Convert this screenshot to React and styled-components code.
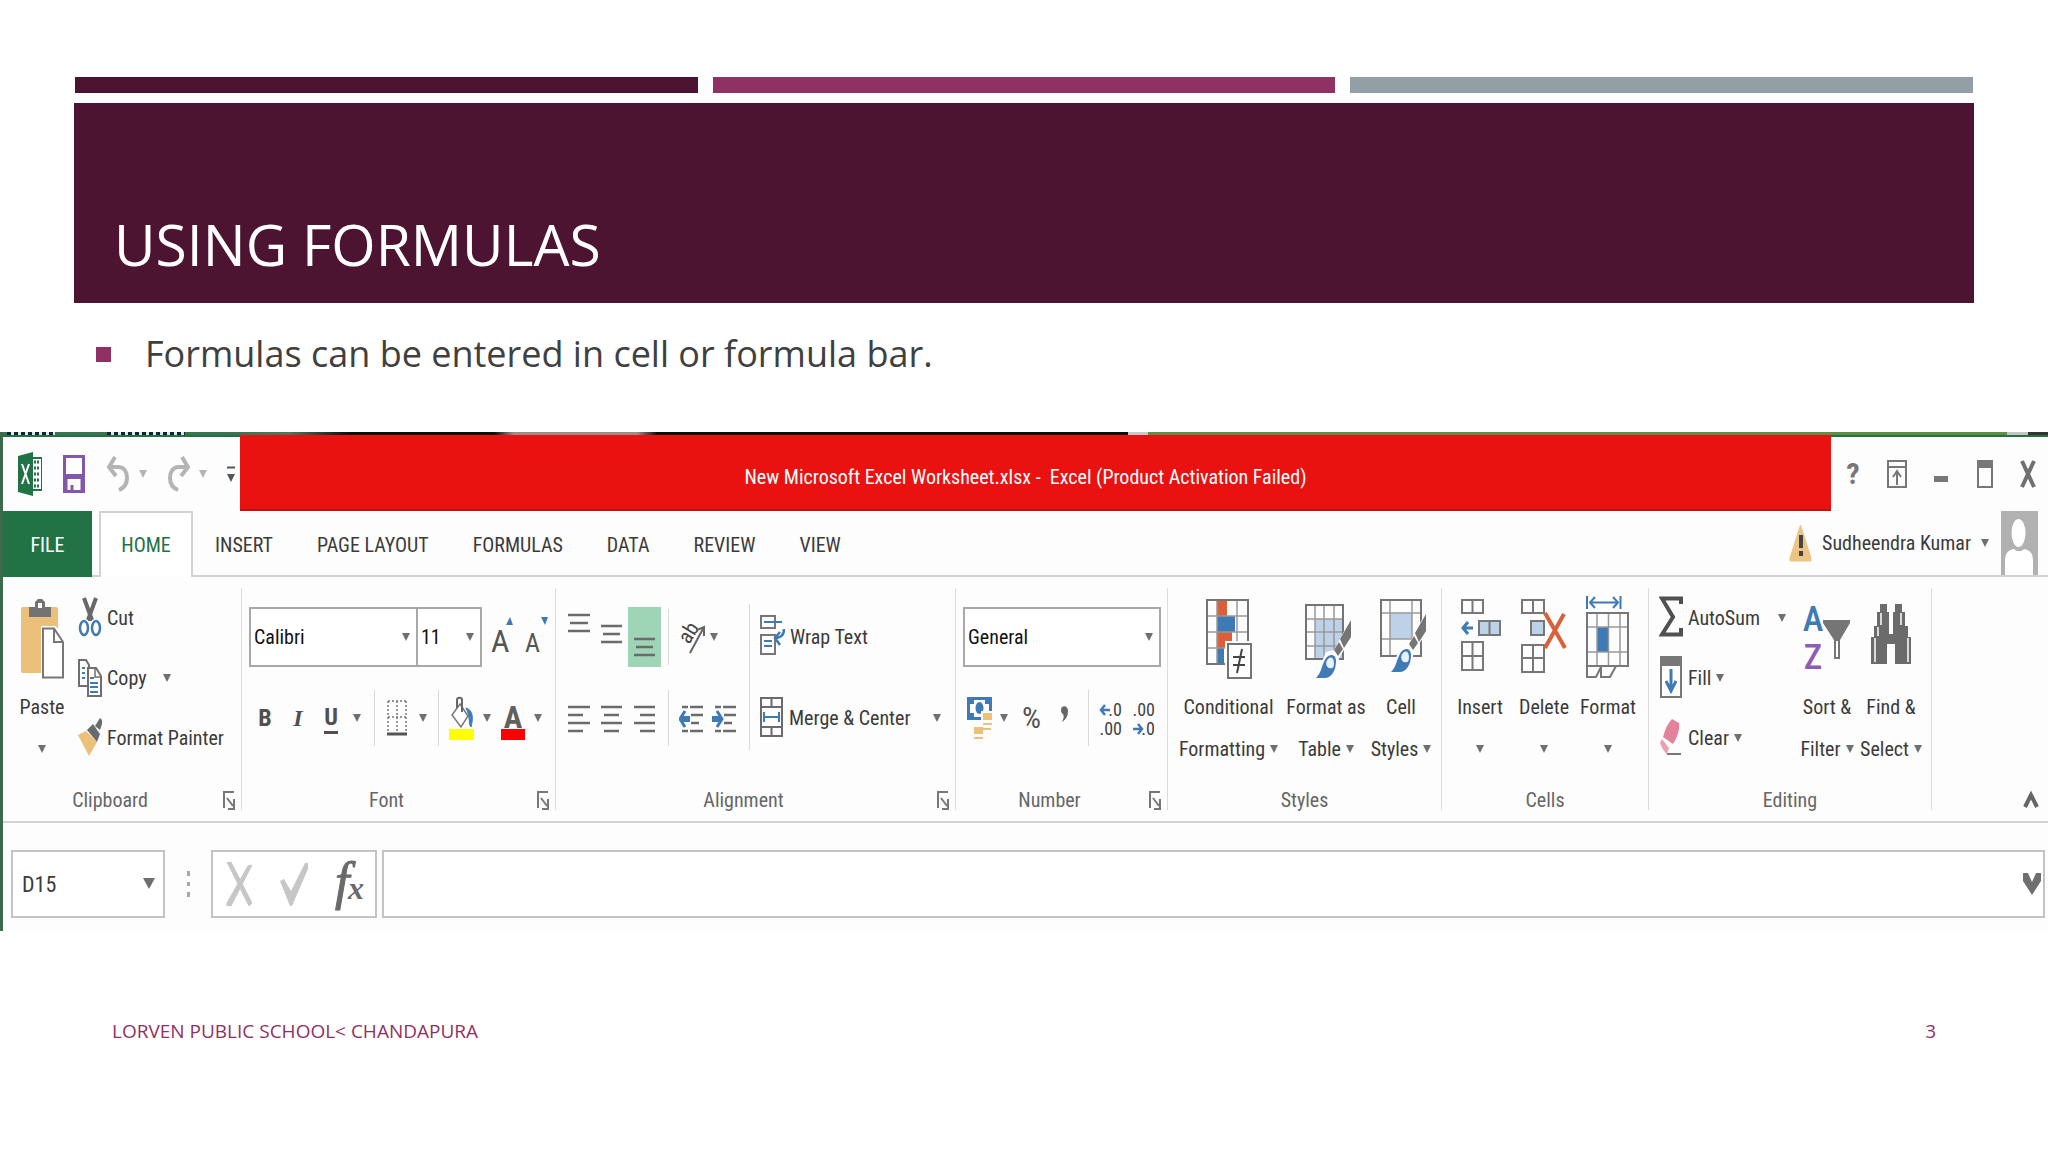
import React from "react";
import styled, { createGlobalStyle, css } from "styled-components";

const ui = `"Roboto Condensed", "Open Sans", sans-serif`;
const slideFont = `"Open Sans", "Noto Sans", sans-serif`;

const c = {
  plum: "#4c1431",
  berry: "#903163",
  slate: "#929fa5",
  green: "#217346",
  ink: "#3b3b3b",
  gray: "#6f6f6f",
  line: "#d2d2d2",
  blue: "#3f7ab5",
  sky: "#bdd1e8",
  orange: "#d9603b",
  sand: "#ebc07a",
};

const GlobalStyle = createGlobalStyle`
  *, *::before, *::after { box-sizing: border-box; }
  body { margin: 0; background: #fff; }
`;

/* ---------- slide ---------- */

const Slide = styled.div`
  min-height: 100vh;
  padding-top: 77px;
  background: #fff;
  font-family: ${slideFont};
`;

const Accents = styled.div`
  display: grid;
  grid-template-columns: repeat(3, 1fr);
  gap: 15px;
  margin: 0 75px 10px;
`;

const Accent = styled.div`
  height: 16px;
  background: ${(p) => p.$color};
`;

const Banner = styled.header`
  display: flex;
  align-items: flex-end;
  height: 200px;
  margin: 0 74px;
  padding: 0 40px 21px;
  background: ${c.plum};
`;

const Title = styled.h1`
  margin: 0;
  color: #fff;
  font-size: 57px;
  font-weight: 400;
  line-height: 76px;
  text-transform: uppercase;
`;

const Points = styled.ul`
  margin: 26px 96px 53px;
  padding: 0;
  list-style: none;
`;

const Point = styled.li`
  display: flex;
  align-items: center;
  gap: 34px;
  color: #404040;
  font-size: 36px;
  line-height: 50px;

  &::before {
    content: "";
    width: 15px;
    height: 15px;
    background: ${c.berry};
  }
`;

const SlideFooter = styled.footer`
  display: flex;
  justify-content: space-between;
  margin-top: 88px;
  padding: 0 112px;
  color: ${c.berry};
  font-size: 19px;
  line-height: 24px;
`;

/* ---------- excel window ---------- */

const Window = styled.section`
  border-left: 3px solid #3b6b4c;
  background: #fdfdfd;
  color: ${c.ink};
  font-family: ${ui};
  font-size: 20px;
`;

const TopEdge = styled.div`
  height: 3px;
  background:
    repeating-linear-gradient(90deg, #123 0 4px, #dfe8e2 4px 7px) 4px 0 / 48px 3px no-repeat,
    repeating-linear-gradient(90deg, #123 0 4px, #dfe8e2 4px 7px) 104px 0 / 78px 3px no-repeat,
    linear-gradient(90deg, #3a7350 0 11%, #53745a 14%, #0d0d0d 17% 24%, #a08c86 25% 31%,
      #0d0d0d 32% 55%, #c9c9c9 55% 56%, #5f8f45 56% 98%, #c4c4c4 98% 99%, #333 99%);
`;

const TitleBar = styled.div`
  display: flex;
  height: 76px;
`;

const TitleSide = styled.div`
  display: flex;
  flex: none;
  align-items: center;
  width: ${(p) => p.$w}px;
  padding-left: ${(p) => p.$pad || 0}px;
  border-top: 2px solid ${c.green};
`;

const DocTitle = styled.div`
  display: flex;
  flex: 1;
  align-items: center;
  justify-content: center;
  padding: 10px 20px 0 0;
  border-bottom: 2px solid #bd1313;
  background: #ea1111;
  color: #fff;
  line-height: 28px;
  white-space: pre;
`;

const Btn = styled.button`
  display: flex;
  flex: none;
  align-items: center;
  justify-content: center;
  width: ${(p) => (p.$w ? `${p.$w}px` : "auto")};
  height: ${(p) => (p.$h ? `${p.$h}px` : "60px")};
  margin: 0 0 0 ${(p) => p.$ml || 0}px;
  padding: 0;
  border: 0;
  background: ${(p) => (p.$on ? "#9fd5b7" : "transparent")};
  color: inherit;
  font: inherit;
  cursor: pointer;
`;

const Glyph = styled.span`
  color: #505050;
  font-size: 24px;
  line-height: 28px;
  ${(p) => p.$kind === "bold" && css`font-weight: 700;`}
  ${(p) => p.$kind === "italic" && css`font-family: "Liberation Serif", serif; font-style: italic; font-weight: 700;`}
  ${(p) => p.$kind === "underline" && css`font-weight: 700; border-bottom: 3px solid #505050;`}
  ${(p) => p.$kind === "help" && css`font-weight: 700; font-size: 30px; color: #777;`}
  ${(p) => p.$kind === "percent" && css`font-size: 30px;`}
`;

const Svg = styled.svg`
  display: block;
  flex: none;
`;

const TabBar = styled.nav`
  display: flex;
  height: 66px;
  border-bottom: 2px solid ${c.line};
`;

const Tab = styled.a`
  display: flex;
  align-items: center;
  height: 66px;
  padding: 2px 22px 0;
  color: ${c.ink};
  text-decoration: none;
  white-space: nowrap;
  ${(p) => p.$kind === "file" && css`
    justify-content: center;
    width: 89px;
    margin-right: 7px;
    background: ${c.green};
    color: #fff;
  `}
  ${(p) => p.$kind === "active" && css`
    justify-content: center;
    width: 94px;
    border: 2px solid ${c.line};
    border-bottom: 0;
    padding: 0;
    background: #fff;
    color: ${c.green};
  `}
`;

const Account = styled.button`
  display: flex;
  align-items: center;
  gap: 10px;
  height: 64px;
  margin: 0 10px 0 auto;
  padding: 0;
  border: 0;
  background: transparent;
  color: inherit;
  font: inherit;
`;

const Avatar = styled.span`
  margin-left: 2px;
`;

const Ribbon = styled.div`
  display: flex;
  padding: 11px 0;
  border-bottom: 2px solid ${c.line};
`;

const GroupBox = styled.section`
  display: flex;
  flex: none;
  flex-direction: column;
  width: ${(p) => p.$w}px;
  height: 222px;
  border-right: 1px solid #dcdcdc;
`;

const Tools = styled.div`
  display: flex;
  flex: 1;
  padding-left: ${(p) => p.$pad || 7}px;
`;

const GroupFoot = styled.footer`
  display: flex;
  align-items: center;
  height: 20px;
  padding-right: ${(p) => (p.$launcher ? 6 : 0)}px;
  color: #666;
`;

const GroupName = styled.h2`
  flex: 1;
  margin: 0;
  font-size: 20px;
  font-weight: 400;
  line-height: 20px;
  text-align: center;
`;

const Col = styled.div`
  display: flex;
  flex-direction: column;
  width: ${(p) => (p.$w ? `${p.$w}px` : "auto")};
  padding-top: ${(p) => p.$top || 0}px;
  gap: ${(p) => p.$gap || 0}px;
`;

const Row = styled.div`
  display: flex;
  align-items: center;
  height: 60px;
`;

const Sep = styled.span`
  flex: none;
  align-self: stretch;
  width: 1px;
  margin: 2px ${(p) => p.$r || 0}px 2px ${(p) => p.$l || 0}px;
  background: #d9d9d9;
`;

const TallSep = styled(Sep)`
  align-self: flex-start;
  height: 146px;
  margin: 16px 6px 0 0;
`;

const SmallBtn = styled(Btn)`
  gap: 5px;
  padding-left: 4px;
  white-space: nowrap;
`;

const BigBtn = styled.button`
  display: flex;
  flex: none;
  flex-direction: column;
  align-items: center;
  width: ${(p) => p.$w}px;
  margin: 0;
  padding: 8px 0 0;
  border: 0;
  background: transparent;
  color: inherit;
  font: inherit;
  line-height: 42px;
  white-space: nowrap;
  cursor: pointer;
`;

const BigLine = styled.span`
  display: flex;
  align-items: center;
  gap: 5px;
  height: 42px;
  &:first-of-type { margin-top: 6px; }
`;

const Combo = styled.div`
  display: grid;
  align-items: center;
  width: ${(p) => p.$w}px;
  height: 60px;
  margin-left: ${(p) => p.$ml || 0}px;

  & > * { grid-area: 1 / 1; }
  & > svg { justify-self: end; margin-right: 8px; pointer-events: none; }
`;

const Select = styled.select`
  width: 100%;
  height: 60px;
  padding: 0 20px 0 3px;
  appearance: none;
  border: 2px solid #a8a8a8;
  border-radius: 0;
  background: #fff;
  color: #111;
  font: inherit;
`;

const CollapseSlot = styled.div`
  display: flex;
  flex: 1;
  align-items: flex-end;
  justify-content: flex-end;
  padding-right: 9px;
`;

const FormulaBar = styled.div`
  display: flex;
  padding: 27px 3px 13px 8px;
`;

const Divider = styled.span`
  display: flex;
  flex: none;
  align-items: center;
  justify-content: center;
  width: 46px;
`;

const Field = styled.div`
  display: flex;
  flex: ${(p) => (p.$w ? "none" : "1")};
  align-items: center;
  width: ${(p) => (p.$w ? `${p.$w}px` : "auto")};
  height: 68px;
  margin-left: ${(p) => p.$ml || 0}px;
  border: 2px solid #c3c3c3;
  background: #fff;
`;

const Input = styled.input`
  flex: 1;
  min-width: 0;
  height: 60px;
  padding: 0 0 0 9px;
  border: 0;
  outline: 0;
  background: transparent;
  color: ${c.ink};
  font: inherit;
  font-size: ${(p) => (p.$large ? 22 : 20)}px;
`;

/* ---------- drawings ---------- */

const Icon = ({ w, h, children }) => (
  <Svg width={w} height={h} viewBox={`0 0 ${w} ${h}`} fill="none" aria-hidden="true">
    {children}
  </Svg>
);

const Caret = ({ color = c.gray, big }) => (
  <Icon w={big ? 12 : 8} h={big ? 12 : 8}>
    <path d={big ? "M0 0h12L6 11z" : "M0 0h8L4 8z"} fill={color} />
  </Icon>
);

const ExcelLogo = () => (
  <Icon w={24} h={44}>
    <path d="M14 6h10v32H14z" fill="#fff" stroke={c.green} strokeWidth="2" />
    <path d="M16 10h6M16 16h6M16 22h6M16 28h6M16 34h6" stroke={c.green} strokeWidth="3" strokeDasharray="2 1" />
    <path d="M0 4l15-4v44L0 40z" fill={c.green} />
    <path d="M4 12l7 20M11 12L4 32" stroke="#fff" strokeWidth="2" />
  </Icon>
);

const SaveIcon = () => (
  <Icon w={22} h={38}>
    <path d="M1.5 1.5h19v35h-19z" stroke="#8458a8" strokeWidth="3" fill="#fff" />
    <path d="M1 19h20v5H1z" fill="#8458a8" />
    <path d="M3 24v12M19 24v12M9 30v7" stroke="#8458a8" strokeWidth="3" />
  </Icon>
);

const UndoIcon = ({ flip }) => (
  <Icon w={22} h={36}>
    <g transform={flip ? "translate(22 0) scale(-1 1)" : undefined} stroke="#b4b4b4" strokeWidth="4">
      <path d="M8 1L2 11l7 9" />
      <path d="M2 11h9c6 0 9 5 9 11s-3 10-8 12" />
    </g>
  </Icon>
);

const CustomizeIcon = () => (
  <Icon w={8} h={16}>
    <path d="M0 1.5h8" stroke="#555" strokeWidth="2" />
    <path d="M0 8h8l-4 8z" fill="#555" />
  </Icon>
);

const RibbonOptionsIcon = () => (
  <Icon w={20} h={28}>
    <path d="M1 1h18v26H1zM1 7h18" stroke="#777" strokeWidth="2" />
    <path d="M10 25V11M6 17l4-6 4 6" stroke="#777" strokeWidth="2" />
  </Icon>
);

const MinimizeIcon = () => <Icon w={14} h={28}><path d="M0 16h14v6H0z" fill="#777" /></Icon>;
const MaximizeIcon = () => (
  <Icon w={16} h={28}><path d="M1 1h14v26H1z" stroke="#777" strokeWidth="2" /><path d="M0 0h16v8H0z" fill="#777" /></Icon>
);
const CloseIcon = () => (
  <Icon w={16} h={28}><path d="M2 1l12 26M14 1L2 27" stroke="#707070" strokeWidth="4" /></Icon>
);

const WarningIcon = () => (
  <Icon w={23} h={38}>
    <path d="M11.5 1L22 34v3H1v-3z" fill="#edc483" stroke="#edc483" strokeLinejoin="round" />
    <path d="M12 11v13M12 27v5" stroke="#444" strokeWidth="4" />
  </Icon>
);

const AvatarIcon = () => (
  <Icon w={37} h={64}>
    <path d="M0 0h37v64H0z" fill="#b1b1b1" />
    <ellipse cx="17.5" cy="22" rx="7" ry="14" fill="#fff" />
    <path d="M4 64V50c0-8 3-11 9-12 3 3 7 3 10 0 6 1 9 4 9 12v14z" fill="#fff" />
  </Icon>
);

const PasteIcon = () => (
  <Icon w={48} h={84}>
    <rect x="3" y="11" width="37" height="66" rx="2" fill={c.sand} />
    <path d="M11 11h6V6l3-3h4l3 3v5h6v10H11z" fill="#737373" />
    <path d="M20 7h4v5h-4z" fill="#fff" />
    <path d="M23 30h15l9 14v39H23z" fill="#fff" />
    <path d="M25 32.5h11L45 46v35.5H25zM36 33v13h9" stroke="#777" strokeWidth="2" fill="#fff" />
  </Icon>
);

const CutIcon = () => (
  <Icon w={24} h={42}>
    <path d="M6 1l8 22M18 1l-8 22" stroke="#686868" strokeWidth="4" />
    <ellipse cx="6" cy="31" rx="4" ry="7" stroke={c.blue} strokeWidth="2.5" />
    <ellipse cx="18" cy="31" rx="4" ry="7" stroke={c.blue} strokeWidth="2.5" />
    <path d="M12 18v6" stroke="#686868" strokeWidth="4" />
  </Icon>
);

const CopyIcon = () => (
  <Icon w={24} h={40}>
    <path d="M10 28H1V2h7l3 5v3" stroke="#6f6f6f" strokeWidth="2" />
    <path d="M4 10h3M4 15h3M4 20h3" stroke={c.blue} strokeWidth="2" />
    <path d="M10 10h8l5 8v20H10z" fill="#fff" stroke="#6f6f6f" strokeWidth="2" />
    <path d="M17 10v9h5" stroke="#6f6f6f" strokeWidth="1.5" />
    <path d="M12 20h4M12 25h8M12 29h8M12 34h8" stroke={c.blue} strokeWidth="2" />
  </Icon>
);

const PainterIcon = () => (
  <Icon w={24} h={42}>
    <path d="M0 18l8-4 11 11-8 14z" fill={c.sand} />
    <path d="M9 13l6-6 7 10-3 8z" fill="#6b6b6b" />
    <path d="M17 9l5-8 3 3-3 9z" fill="#6b6b6b" />
  </Icon>
);

const GrowIcon = ({ shrink }) => (
  <Icon w={26} h={60}>
    <text x="1" y="45" fontFamily={ui} fontSize={shrink ? 26 : 32} fill="#555">A</text>
    <path d={shrink ? "M17 10h7l-3 8z" : "M16 18h7l-3-8z"} fill={c.blue} />
  </Icon>
);

const BordersIcon = () => (
  <Icon w={20} h={36}>
    <path d="M1 1h18M1 17h18M1 1v32M10 1v32M19 1v32" stroke="#777" strokeWidth="1.5" strokeDasharray="2 2" />
    <path d="M0 34h20" stroke="#555" strokeWidth="3" />
  </Icon>
);

const FillColorIcon = () => (
  <Icon w={25} h={44}>
    <path d="M11 8l8 12-7 11-9-12z" fill="#fff" stroke="#777" strokeWidth="1.5" />
    <path d="M8 12V4c0-3 5-3 5 0v12" stroke="#666" strokeWidth="2" />
    <path d="M17 12c6 2 8 8 5 19-3-3 0-9-5-19z" fill={c.blue} stroke={c.blue} />
    <path d="M0 33h25v11H0z" fill="#ff0" />
  </Icon>
);

const FontColorIcon = () => (
  <Icon w={24} h={44}>
    <text x="12" y="32" textAnchor="middle" fontFamily={ui} fontWeight="700" fontSize="31" fill="#606060">A</text>
    <path d="M0 33h24v11H0z" fill="#f00" />
  </Icon>
);

const LINES = {
  top: [[7, 1, 23], [15, 3, 21], [23, 1, 23]],
  middle: [[18, 1, 22], [26, 3, 20], [34, 1, 22]],
  bottom: [[31, 1, 22], [39, 3, 20], [47, 1, 22]],
  left: [[18, 1, 23], [26, 1, 16], [34, 1, 23], [42, 1, 16]],
  center: [[18, 1, 22], [26, 4, 19], [34, 1, 22], [42, 4, 19]],
  right: [[18, 1, 22], [26, 7, 22], [34, 1, 22], [42, 7, 22]],
};

const LinesIcon = ({ kind }) => (
  <Icon w={24} h={58}>
    {LINES[kind].map(([y, x1, x2]) => (
      <path key={y} d={`M${x1} ${y}H${x2}`} stroke="#6b6b6b" strokeWidth="2.5" />
    ))}
  </Icon>
);

const IndentIcon = ({ right }) => (
  <Icon w={24} h={58}>
    <path d="M3 18h6M11 18h13M12 26h12M12 34h8M3 42h6M11 42h13" stroke="#6b6b6b" strokeWidth="2.5" />
    <g transform={right ? "translate(11 0) scale(-1 1)" : undefined}>
      <path d="M2 30h9" stroke={c.blue} strokeWidth="6" />
      <path d="M6 22L1 30l5 8" stroke={c.blue} strokeWidth="3" />
    </g>
  </Icon>
);

const OrientationIcon = () => (
  <Icon w={34} h={60}>
    <text transform="translate(13 38) rotate(-58)" fontFamily={ui} fontSize="21" fill="#444">ab</text>
    <path d="M14 46L28 20M21 23l7-3v9" stroke="#666" strokeWidth="2" />
  </Icon>
);

const WrapIcon = () => (
  <Icon w={25} h={44}>
    <path d="M1 1h14v12H1zM1 20h14v19H1z" stroke="#777" strokeWidth="2" />
    <path d="M4 7h18M4 26h8M4 31h8" stroke={c.blue} strokeWidth="2" />
    <path d="M24 14c0 6-3 9-9 9M20 17l-5 6 5 7" stroke={c.blue} strokeWidth="2.5" />
  </Icon>
);

const MergeIcon = () => (
  <Icon w={24} h={42}>
    <path d="M1 1h21v38H1zM1 10h21M1 30h21M11.5 1v9M11.5 30v9" stroke="#6b6b6b" strokeWidth="2" />
    <path d="M4 20h15M4 15v10M19 15v10" stroke={c.blue} strokeWidth="2" />
  </Icon>
);

const AccountingIcon = () => (
  <Icon w={25} h={44}>
    <path d="M0 1h25v23H0z" fill={c.blue} />
    <path d="M7 4h11v4h4v9h-4v4H7v-4H3V8h4z" fill="#fff" />
    <ellipse cx="12.5" cy="12" rx="4" ry="6" fill={c.blue} />
    <path d="M14 15h11v19H14zM6 28h10v16H6z" fill="#fdfdfd" />
    <path d="M16 17h9v7h-9zM7 31h9v7H7z" fill={c.sand} />
    <path d="M16 28h9M16 33h8M7 42h9" stroke={c.sand} strokeWidth="2" />
  </Icon>
);

const DecimalIcon = ({ less }) => (
  <Icon w={26} h={48}>
    <g fontFamily={ui} fontSize="18" fill="#444" textAnchor="end">
      <text x="24" y="22">{less ? ".00" : ".0"}</text>
      <text x="24" y="41">{less ? ".0" : ".00"}</text>
    </g>
    <path d={less ? "M2 35h9M7 30l4 5-4 5" : "M12 16H3M7 11l-4 5 4 5"} stroke={c.blue} strokeWidth="2.5" />
  </Icon>
);

const ConditionalIcon = () => (
  <Icon w={48} h={84}>
    <path d="M12 3h10v17H12zM12 36h15v16H12z" fill={c.orange} />
    <path d="M12 20h18v16H12zM12 52h7v16h-7z" fill={c.blue} />
    <path d="M2 20h41M2 36h41M2 52h41M12 4v64M32 4v64" stroke="#999" strokeWidth="1.5" />
    <path d="M2 4h41v64H2z" stroke="#747474" strokeWidth="2" />
    <path d="M20 45h28v39H20z" fill="#fdfdfd" />
    <path d="M23 48h23v34H23z" fill="#fff" stroke="#747474" strokeWidth="2" />
    <path d="M28 61h12M28 69h12M37 53l-5 24" stroke="#444" strokeWidth="2" />
  </Icon>
);

const Brush = ({ y = 0 }) => (
  <g transform={`translate(0 ${y})`}>
    <path d="M48 20L30 54l-8 2-12 28h18l8-24 12-18z" fill="#fdfdfd" />
    <path d="M47 24L36 43l4 9 7-11zM35 46l-5 8 4 6 5-7z" fill="#757575" />
    <path d="M12 82c6-6 5-12 10-20 4-5 10-4 10 3 0 10-5 17-11 17z" fill={c.blue} />
    <path d="M24 63c3-3 6-1 6 4s-2 6-5 5-4-6-1-9z" fill="#e8f0f8" />
  </g>
);

const FormatTableIcon = () => (
  <Icon w={52} h={84}>
    <g transform="translate(4 0)">
      <path d="M11 23h28v39H11z" fill={c.sky} />
      <path d="M2 23h37M2 36h37M2 50h37M11 9v53M20 9v53M30 9v53" stroke="#999" strokeWidth="1.5" />
      <path d="M2 9h37v54H2z" stroke="#747474" strokeWidth="2" />
      <Brush />
    </g>
  </Icon>
);

const CellStylesIcon = () => (
  <Icon w={52} h={84}>
    <g transform="translate(4 0)">
      <path d="M11 17h22v26H11z" fill={c.sky} />
      <path d="M2 17h40M2 43h40M11 4v56M33 4v56" stroke="#999" strokeWidth="1.5" />
      <path d="M2 4h40v56H2z" stroke="#747474" strokeWidth="2" />
      <Brush y={-6} />
    </g>
  </Icon>
);

const InsertIcon = () => (
  <Icon w={48} h={84}>
    <path d="M6 4h21v13H6zM16.5 4v13M6 46h21v28H6zM16.5 46v28M6 60h21" stroke="#777" strokeWidth="2" />
    <path d="M23 25h21v14H23zM33.5 25v14" fill={c.sky} stroke="#777" strokeWidth="2" />
    <path d="M7 32h10M12 26l-5 6 5 6" stroke={c.blue} strokeWidth="3" />
  </Icon>
);

const DeleteIcon = () => (
  <Icon w={48} h={84}>
    <path d="M2 4h22v13H2zM13 4v13M2 49h22v27H2zM13 49v27M2 62h22" stroke="#777" strokeWidth="2" />
    <path d="M11 25h13v14H11z" fill={c.sky} stroke="#777" strokeWidth="2" />
    <path d="M25 17l20 35M44 18L25 52" stroke={c.orange} strokeWidth="4" />
  </Icon>
);

const FormatIcon = () => (
  <Icon w={48} h={84}>
    <path d="M3 0v13M36.5 0v13M6 6.5h28M11 1L6 6.5l5 5.5M29 1l5 5.5-5 5.5" stroke={c.blue} strokeWidth="2" />
    <path d="M13 31h11v25H13z" fill={c.blue} />
    <path d="M3 31h41M3 56h41M13 17v53M24.5 17v53M36 17v53" stroke="#999" strokeWidth="1.5" />
    <path d="M3 17h41v53H3zM3 70v11h9l5-10v10h9l6-11" stroke="#777" strokeWidth="2" />
  </Icon>
);

const SumIcon = () => (
  <Icon w={24} h={44}>
    <path d="M22 8V2.5H3L14 21 3 38.5h19V32" stroke="#505050" strokeWidth="4" />
  </Icon>
);

const FillIcon = () => (
  <Icon w={24} h={46}>
    <path d="M2 2h20v40H2z" stroke="#777" strokeWidth="2" fill="#fff" />
    <path d="M1 1h22v10H1z" fill="#777" />
    <path d="M12 14v22M7 26l5 10 5-10" stroke={c.blue} strokeWidth="3" />
  </Icon>
);

const ClearIcon = () => (
  <Icon w={24} h={42}>
    <path d="M13 2l7 4c1 8-2 14-6 21l-10-7C6 12 9 6 13 2z" fill="#e2839a" />
    <path d="M3 22l7 9-2 6c-3-2-6-8-7-11z" fill="#e8a0b2" />
    <path d="M8 37h14" stroke="#777" strokeWidth="2" />
  </Icon>
);

const SortIcon = () => (
  <Icon w={48} h={84}>
    <text x="10" y="35" textAnchor="middle" fontFamily={ui} fontWeight="500" fontSize="35" fill={c.blue}>A</text>
    <text x="10" y="73" textAnchor="middle" fontFamily={ui} fontWeight="500" fontSize="35" fill="#8f5bb5">Z</text>
    <path d="M20 24h27v3L37 44v19h-6V44L20 27z" fill="#757575" />
    <path d="M34 45v16" stroke="#fff" strokeWidth="2" />
  </Icon>
);

const FindIcon = () => (
  <Icon w={48} h={84}>
    <path d="M13 8h7v8h2v22h4V16h2V8h7v8h3v14h3v11h3v27H28V48h-8v20H4V41h3V30h3V16h3z" fill="#6b6b6b" />
    <path d="M8 42v24M41 42v24M11 31v9M14 17v12M34 17v12M22 36h4" stroke="#fff" strokeWidth="1.5" />
  </Icon>
);

const LauncherIcon = () => (
  <Icon w={12} h={20}>
    <path d="M1 18V2h10" stroke="#777" strokeWidth="2" />
    <path d="M4 8l6 8M11 9v10H5" stroke="#777" strokeWidth="2" />
  </Icon>
);

const CollapseIcon = () => (
  <Icon w={16} h={18}><path d="M2 16L8 4l6 12" stroke="#666" strokeWidth="4" /></Icon>
);

const ExpandIcon = () => <Icon w={18} h={22}><path d="M0 0h5l4 9 4-9h5v8L9 22 0 8z" fill="#6f6f6f" /></Icon>;
const DotsIcon = () => (
  <Icon w={3} h={28}><path d="M0 1h3v5H0zM0 12h3v4H0zM0 22h3v5H0z" fill="#a8a8a8" /></Icon>
);
const CancelIcon = () => (
  <Icon w={26} h={44}>
    <path d="M1 0h4l21 41-3 3zM26 3L5 44H1V41L22 4z" fill="#c6c6c6" stroke="#c6c6c6" />
  </Icon>
);
const EnterIcon = () => <Icon w={30} h={46}><path d="M1 20l4-2 7 12L26 2h3v6L13 45h-2z" fill="#c6c6c6" /></Icon>;
const FxIcon = () => (
  <Icon w={36} h={62}>
    <g fontFamily='"Liberation Serif", serif' fontStyle="italic" fill="#6a6a6a">
      <text x="5" y="46" fontSize="52" stroke="#6a6a6a">f</text>
      <text x="18" y="46" fontWeight="700" fontSize="32">x</text>
    </g>
  </Icon>
);

/* ---------- composed parts ---------- */

const IconBtn = ({ label, children, ...rest }) => (
  <Btn type="button" aria-label={label} {...rest}>{children}</Btn>
);

const Drop = ({ label, w, color, ...rest }) => (
  <IconBtn label={`${label} options`} $w={w} {...rest}><Caret color={color} /></IconBtn>
);

const Group = ({ name, w, pad, launcher, children }) => (
  <GroupBox $w={w} aria-label={name}>
    <Tools $pad={pad}>{children}</Tools>
    <GroupFoot $launcher={launcher}>
      <GroupName>{name}</GroupName>
      {launcher && <IconBtn label={`${name} settings`} $w={12} $h={20} $ml={6}><LauncherIcon /></IconBtn>}
    </GroupFoot>
  </GroupBox>
);

const Big = ({ w, icon, top, bottom }) => (
  <BigBtn type="button" $w={w}>
    {icon}
    <BigLine>{top}</BigLine>
    <BigLine>{bottom}<Caret /></BigLine>
  </BigBtn>
);

const Picker = ({ label, w, ml, options }) => (
  <Combo $w={w} $ml={ml}>
    <Select aria-label={label} defaultValue={options[0]}>
      {options.map((o) => <option key={o}>{o}</option>)}
    </Select>
    <Caret />
  </Combo>
);

const TABS = ["INSERT", "PAGE LAYOUT", "FORMULAS", "DATA", "REVIEW", "VIEW"];

const ExcelWindow = () => (
  <Window aria-label="Excel">
    <TopEdge />
    <TitleBar>
      <TitleSide $w={237} $pad={8}>
        <IconBtn label="Excel" $w={38}><ExcelLogo /></IconBtn>
        <IconBtn label="Save" $w={50}><SaveIcon /></IconBtn>
        <IconBtn label="Undo" $w={38}><UndoIcon /></IconBtn>
        <Drop label="Undo" w={12} color="#b4b4b4" />
        <IconBtn label="Redo" $w={36} $ml={12}><UndoIcon flip /></IconBtn>
        <Drop label="Redo" w={12} color="#b4b4b4" />
        <IconBtn label="Customize toolbar" $w={20} $ml={12}><CustomizeIcon /></IconBtn>
      </TitleSide>
      <DocTitle>{"New Microsoft Excel Worksheet.xlsx -  Excel (Product Activation Failed)"}</DocTitle>
      <TitleSide $w={217}>
        <IconBtn label="Help" $w={44}><Glyph $kind="help">?</Glyph></IconBtn>
        <IconBtn label="Ribbon display options" $w={44}><RibbonOptionsIcon /></IconBtn>
        <IconBtn label="Minimize" $w={44}><MinimizeIcon /></IconBtn>
        <IconBtn label="Maximize" $w={44}><MaximizeIcon /></IconBtn>
        <IconBtn label="Close" $w={41}><CloseIcon /></IconBtn>
      </TitleSide>
    </TitleBar>

    <TabBar>
      <Tab href="#file" $kind="file">FILE</Tab>
      <Tab href="#home" $kind="active">HOME</Tab>
      {TABS.map((t) => <Tab key={t} href={`#${t.toLowerCase().replace(" ", "-")}`}>{t}</Tab>)}
      <Account type="button">
        <WarningIcon />
        Sudheendra Kumar
        <Caret />
        <Avatar><AvatarIcon /></Avatar>
      </Account>
    </TabBar>

    <Ribbon>
      <Group name="Clipboard" w={239} launcher>
        <Big w={64} icon={<PasteIcon />} top="Paste" bottom="" />
        <Col>
          <Row><SmallBtn type="button"><CutIcon />Cut</SmallBtn></Row>
          <Row>
            <SmallBtn type="button"><CopyIcon />Copy</SmallBtn>
            <Drop label="Copy" w={20} $ml={11} />
          </Row>
          <Row><SmallBtn type="button"><PainterIcon />Format Painter</SmallBtn></Row>
        </Col>
      </Group>

      <Group name="Font" w={314} launcher>
        <Col $top={19} $gap={21}>
          <Row>
            <Picker label="Font" w={169} options={["Calibri", "Arial", "Cambria"]} />
            <Picker label="Font size" w={66} ml={-2} options={["11", "12", "14"]} />
            <IconBtn label="Increase font size" $w={36} $ml={3}><GrowIcon /></IconBtn>
            <IconBtn label="Decrease font size" $w={32}><GrowIcon shrink /></IconBtn>
          </Row>
          <Row>
            <IconBtn label="Bold" $w={32}><Glyph $kind="bold">B</Glyph></IconBtn>
            <IconBtn label="Italic" $w={34}><Glyph $kind="italic">I</Glyph></IconBtn>
            <IconBtn label="Underline" $w={32}><Glyph $kind="underline">U</Glyph></IconBtn>
            <Drop label="Underline" w={20} />
            <Sep $l={7} $r={5} />
            <IconBtn label="Borders" $w={33}><BordersIcon /></IconBtn>
            <Drop label="Borders" w={20} />
            <Sep $l={5} $r={6} />
            <IconBtn label="Fill color" $w={33}><FillColorIcon /></IconBtn>
            <Drop label="Fill color" w={18} />
            <IconBtn label="Font color" $w={34}><FontColorIcon /></IconBtn>
            <Drop label="Font color" w={16} />
          </Row>
        </Col>
      </Group>

      <Group name="Alignment" w={400} pad={6} launcher>
        <Col $w={187} $top={19} $gap={21}>
          <Row>
            <IconBtn label="Top align" $w={33}><LinesIcon kind="top" /></IconBtn>
            <IconBtn label="Middle align" $w={33}><LinesIcon kind="middle" /></IconBtn>
            <IconBtn label="Bottom align" $w={33} $on><LinesIcon kind="bottom" /></IconBtn>
            <Sep $l={7} $r={7} />
            <IconBtn label="Orientation" $w={34}><OrientationIcon /></IconBtn>
            <Drop label="Orientation" w={8} />
          </Row>
          <Row>
            <IconBtn label="Align left" $w={33}><LinesIcon kind="left" /></IconBtn>
            <IconBtn label="Center" $w={33}><LinesIcon kind="center" /></IconBtn>
            <IconBtn label="Align right" $w={33}><LinesIcon kind="right" /></IconBtn>
            <Sep $l={7} $r={5} />
            <IconBtn label="Decrease indent" $w={34}><IndentIcon /></IconBtn>
            <IconBtn label="Increase indent" $w={32}><IndentIcon right /></IconBtn>
          </Row>
        </Col>
        <TallSep />
        <Col $top={19} $gap={21}>
          <Row><SmallBtn type="button"><WrapIcon />Wrap Text</SmallBtn></Row>
          <Row>
            <SmallBtn type="button"><MergeIcon />Merge &amp; Center</SmallBtn>
            <Drop label="Merge" w={20} $ml={17} />
          </Row>
        </Col>
      </Group>

      <Group name="Number" w={212} launcher>
        <Col $top={19} $gap={21}>
          <Row><Picker label="Number format" w={198} options={["General", "Number", "Currency"]} /></Row>
          <Row>
            <IconBtn label="Accounting format" $w={33}><AccountingIcon /></IconBtn>
            <Drop label="Accounting format" w={16} />
            <IconBtn label="Percent" $w={39}><Glyph $kind="percent">%</Glyph></IconBtn>
            <IconBtn label="Comma style" $w={26}>
              <Icon w={8} h={40}><path d="M1 12c0-5 7-5 7 1 0 6-3 9-6 11 2-4 2-6 1-8-1 0-2-2-2-4z" fill="#666" /></Icon>
            </IconBtn>
            <Sep $l={11} $r={5} />
            <IconBtn label="Increase decimal" $w={33}><DecimalIcon /></IconBtn>
            <IconBtn label="Decrease decimal" $w={33}><DecimalIcon less /></IconBtn>
          </Row>
        </Col>
      </Group>

      <Group name="Styles" w={274} pad={8}>
        <Big w={105} icon={<ConditionalIcon />} top="Conditional" bottom="Formatting" />
        <Big w={90} icon={<FormatTableIcon />} top="Format as" bottom="Table" />
        <Big w={60} icon={<CellStylesIcon />} top="Cell" bottom="Styles" />
      </Group>

      <Group name="Cells" w={207} pad={6}>
        <Big w={64} icon={<InsertIcon />} top="Insert" bottom="" />
        <Big w={64} icon={<DeleteIcon />} top="Delete" bottom="" />
        <Big w={64} icon={<FormatIcon />} top="Format" bottom="" />
      </Group>

      <Group name="Editing" w={283} pad={6}>
        <Col $w={142}>
          <Row>
            <SmallBtn type="button"><SumIcon />AutoSum</SmallBtn>
            <Drop label="AutoSum" w={20} $ml={12} />
          </Row>
          <Row><SmallBtn type="button"><FillIcon />Fill<Caret /></SmallBtn></Row>
          <Row><SmallBtn type="button"><ClearIcon />Clear<Caret /></SmallBtn></Row>
        </Col>
        <Big w={60} icon={<SortIcon />} top="Sort &amp;" bottom="Filter" />
        <Big w={68} icon={<FindIcon />} top="Find &amp;" bottom="Select" />
      </Group>

      <CollapseSlot>
        <IconBtn label="Collapse ribbon" $w={16} $h={20}><CollapseIcon /></IconBtn>
      </CollapseSlot>
    </Ribbon>

    <FormulaBar>
      <Field $w={154}>
        <Input aria-label="Name box" defaultValue="D15" $large />
        <IconBtn label="Names" $w={28}><Caret big /></IconBtn>
      </Field>
      <Divider><DotsIcon /></Divider>
      <Field $w={166}>
        <IconBtn label="Cancel" $w={52}><CancelIcon /></IconBtn>
        <IconBtn label="Enter" $w={58}><EnterIcon /></IconBtn>
        <IconBtn label="Insert function" $w={50}><FxIcon /></IconBtn>
      </Field>
      <Field $ml={5}>
        <Input aria-label="Formula" defaultValue="" />
        <IconBtn label="Expand formula bar" $w={22}><ExpandIcon /></IconBtn>
      </Field>
    </FormulaBar>
  </Window>
);

export default function App() {
  return (
    <>
      <GlobalStyle />
      <Slide>
        <Accents>
          <Accent $color={c.plum} />
          <Accent $color={c.berry} />
          <Accent $color={c.slate} />
        </Accents>
        <Banner>
          <Title>Using Formulas</Title>
        </Banner>
        <Points>
          <Point>Formulas can be entered in cell or formula bar.</Point>
        </Points>
        <ExcelWindow />
        <SlideFooter>
          <span>LORVEN PUBLIC SCHOOL&lt; CHANDAPURA</span>
          <span>3</span>
        </SlideFooter>
      </Slide>
    </>
  );
}
